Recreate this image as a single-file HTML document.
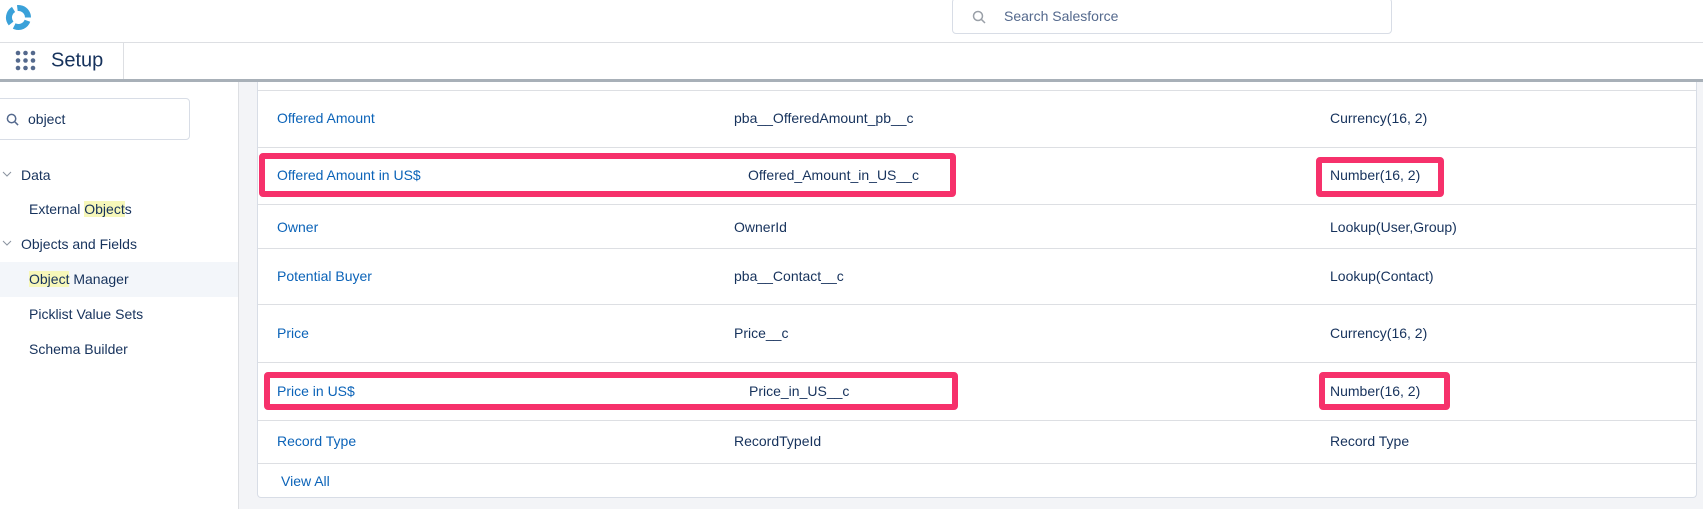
<!DOCTYPE html>
<html><head><style>
*{margin:0;padding:0;box-sizing:border-box}
body{width:1703px;height:509px;overflow:hidden;background:#fff;font-family:"Liberation Sans",sans-serif;font-size:14px;color:#16325c;position:relative}
.a{position:absolute}
.lk{color:#0b63b8}
.red{position:absolute;border:6px solid #f6316b;border-radius:4px}
.t{position:absolute;white-space:nowrap;transform:translateY(-50%)}
.hl{background:#f7f7b9}
</style></head><body>
<svg class="a" style="left:5px;top:4px" width="27" height="27" viewBox="0 0 27 27">
<circle cx="13.5" cy="13.5" r="9.5" fill="none" stroke="#3aa1d9" stroke-width="6" stroke-dasharray="16 4" transform="rotate(20 13.5 13.5)"/>
</svg>
<div class="a" style="left:952px;top:-2px;width:440px;height:36px;border:1px solid #d8dde6;border-radius:4px"></div>
<svg class="a" style="left:972px;top:10px" width="14" height="14" viewBox="0 0 14 14"><circle cx="6" cy="6" r="4.5" fill="none" stroke="#9aa0a8" stroke-width="1.5"/><line x1="9.3" y1="9.3" x2="13" y2="13" stroke="#9aa0a8" stroke-width="1.5"/></svg>
<div class="t" style="left:1004px;top:16px;color:#54698d;font-size:14px">Search Salesforce</div>
<div class="a" style="left:0;top:42px;width:1703px;height:1px;background:#dddfe3"></div>
<svg class="a" style="left:15px;top:50px" width="21" height="21" viewBox="0 0 21 21" fill="#54698d">
<circle cx="3" cy="3" r="2.3"/><circle cx="10.5" cy="3" r="2.3"/><circle cx="18" cy="3" r="2.3"/>
<circle cx="3" cy="10.5" r="2.3"/><circle cx="10.5" cy="10.5" r="2.3"/><circle cx="18" cy="10.5" r="2.3"/>
<circle cx="3" cy="18" r="2.3"/><circle cx="10.5" cy="18" r="2.3"/><circle cx="18" cy="18" r="2.3"/></svg>
<div class="t" style="left:51px;top:61px;font-size:20px;color:#16325c">Setup</div>
<div class="a" style="left:123px;top:43px;width:1px;height:36px;background:#dddfe3"></div>
<div class="a" style="left:0;top:79px;width:1703px;height:3px;background:#a8b0b8"></div>
<div class="a" style="left:-4px;top:98px;width:194px;height:42px;border:1px solid #d8dde6;border-radius:4px"></div>
<svg class="a" style="left:6px;top:113px" width="13" height="13" viewBox="0 0 14 14"><circle cx="6" cy="6" r="4.5" fill="none" stroke="#54698d" stroke-width="1.6"/><line x1="9.3" y1="9.3" x2="13" y2="13" stroke="#54698d" stroke-width="1.6"/></svg>
<div class="t" style="left:28px;top:119px">object</div>
<svg class="a" style="left:2px;top:171px" width="10" height="7" viewBox="0 0 10 7"><path d="M1 1l4 4 4-4" fill="none" stroke="#8a93a0" stroke-width="1"/></svg>
<div class="t" style="left:21px;top:175px">Data</div>
<div class="t" style="left:29px;top:209px">External <span class="hl">Object</span>s</div>
<svg class="a" style="left:2px;top:240px" width="10" height="7" viewBox="0 0 10 7"><path d="M1 1l4 4 4-4" fill="none" stroke="#8a93a0" stroke-width="1"/></svg>
<div class="t" style="left:21px;top:244px">Objects and Fields</div>
<div class="a" style="left:0;top:262px;width:238px;height:35px;background:#f3f6fa"></div>
<div class="t" style="left:29px;top:279px"><span class="hl">Object</span> Manager</div>
<div class="t" style="left:29px;top:314px">Picklist Value Sets</div>
<div class="t" style="left:29px;top:349px">Schema Builder</div>
<div class="a" style="left:238px;top:82px;width:1px;height:427px;background:#dddfe3"></div>
<div class="a" style="left:239px;top:82px;width:1464px;height:427px;background:#f3f4f7"></div>
<div class="a" style="left:257px;top:82px;width:1440px;height:416px;background:#fff;border:1px solid #d8dde6;border-top:none;border-radius:0 0 4px 4px"></div>
<div class="a" style="left:258px;top:90px;width:1438px;height:1px;background:#dddfe3"></div>
<div class="a" style="left:258px;top:147px;width:1438px;height:1px;background:#dddfe3"></div>
<div class="a" style="left:258px;top:204px;width:1438px;height:1px;background:#dddfe3"></div>
<div class="a" style="left:258px;top:248px;width:1438px;height:1px;background:#dddfe3"></div>
<div class="a" style="left:258px;top:304px;width:1438px;height:1px;background:#dddfe3"></div>
<div class="a" style="left:258px;top:362px;width:1438px;height:1px;background:#dddfe3"></div>
<div class="a" style="left:258px;top:420px;width:1438px;height:1px;background:#dddfe3"></div>
<div class="a" style="left:258px;top:463px;width:1438px;height:1px;background:#dddfe3"></div>

<div class="t lk" style="left:277px;top:118px">Offered Amount</div>
<div class="t" style="left:734px;top:118px">pba__OfferedAmount_pb__c</div>
<div class="t" style="left:1330px;top:118px">Currency(16, 2)</div>

<div class="t lk" style="left:277px;top:175px">Offered Amount in US$</div>
<div class="t" style="left:748px;top:175px">Offered_Amount_in_US__c</div>
<div class="t" style="left:1330px;top:175px">Number(16, 2)</div>

<div class="t lk" style="left:277px;top:227px">Owner</div>
<div class="t" style="left:734px;top:227px">OwnerId</div>
<div class="t" style="left:1330px;top:227px">Lookup(User,Group)</div>

<div class="t lk" style="left:277px;top:276px">Potential Buyer</div>
<div class="t" style="left:734px;top:276px">pba__Contact__c</div>
<div class="t" style="left:1330px;top:276px">Lookup(Contact)</div>

<div class="t lk" style="left:277px;top:333px">Price</div>
<div class="t" style="left:734px;top:333px">Price__c</div>
<div class="t" style="left:1330px;top:333px">Currency(16, 2)</div>

<div class="t lk" style="left:277px;top:391px">Price in US$</div>
<div class="t" style="left:749px;top:391px">Price_in_US__c</div>
<div class="t" style="left:1330px;top:391px">Number(16, 2)</div>

<div class="t lk" style="left:277px;top:441px">Record Type</div>
<div class="t" style="left:734px;top:441px">RecordTypeId</div>
<div class="t" style="left:1330px;top:441px">Record Type</div>

<div class="t lk" style="left:281px;top:481px">View All</div>
<div class="red" style="left:259px;top:153px;width:697px;height:44px"></div>
<div class="red" style="left:1316px;top:157px;width:128px;height:40px"></div>
<div class="red" style="left:264px;top:372px;width:694px;height:38px"></div>
<div class="red" style="left:1319px;top:372px;width:131px;height:38px"></div>
</body></html>
